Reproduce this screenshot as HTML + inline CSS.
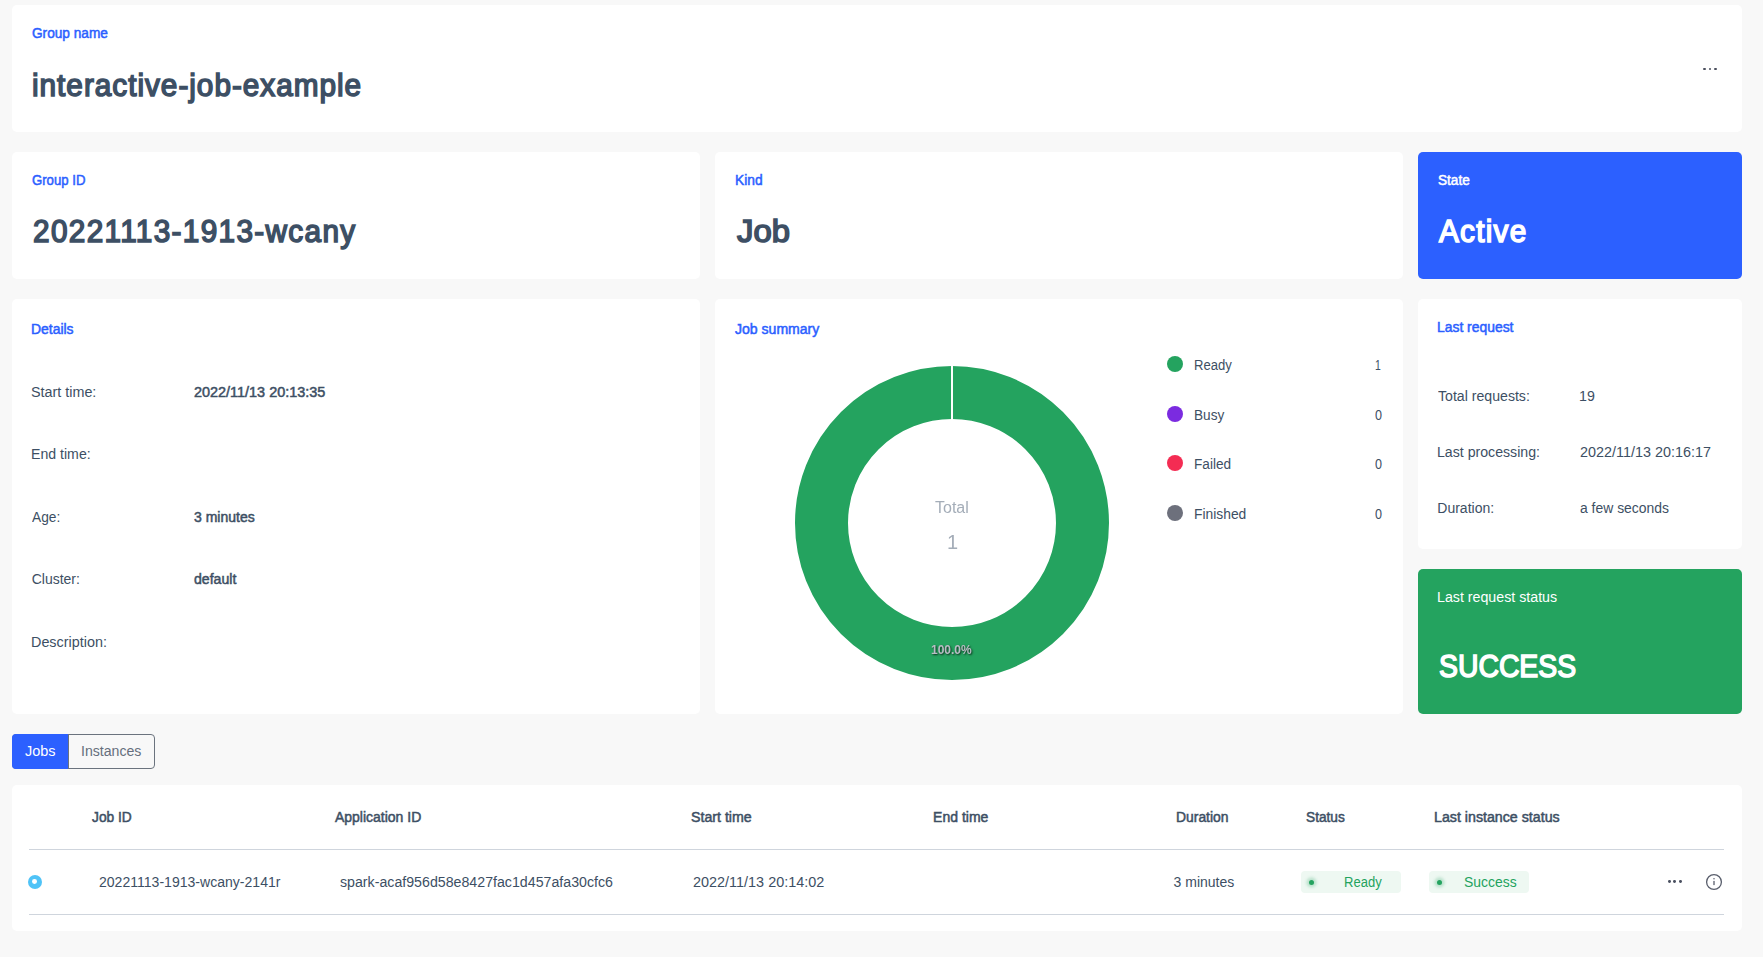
<!DOCTYPE html>
<html>
<head>
<meta charset="utf-8">
<style>
html,body{margin:0;padding:0;}
body{width:1763px;height:957px;overflow:hidden;background:#f8f8f8;position:relative;font-family:"Liberation Sans",sans-serif;}
.c{position:absolute;background:#fff;border-radius:5px;}
.t{position:absolute;white-space:nowrap;transform-origin:0 0;font-family:"Liberation Sans",sans-serif;}
.ln{position:absolute;height:1px;background:#cfd5dd;}
.dot{position:absolute;border-radius:50%;}
</style>
</head>
<body>
<!-- cards -->
<div class="c" style="left:12px;top:5px;width:1730px;height:127px"></div>
<div class="c" style="left:12px;top:152px;width:688px;height:127px"></div>
<div class="c" style="left:715px;top:152px;width:688px;height:127px"></div>
<div class="c" style="left:1418px;top:152px;width:324px;height:127px;background:#2c60ff"></div>
<div class="c" style="left:12px;top:299px;width:688px;height:415px"></div>
<div class="c" style="left:715px;top:299px;width:688px;height:415px"></div>
<div class="c" style="left:1418px;top:299px;width:324px;height:250px"></div>
<div class="c" style="left:1418px;top:569px;width:324px;height:145px;background:#24a35f"></div>
<div class="c" style="left:12px;top:785px;width:1730px;height:146px"></div>

<!-- top ellipsis -->
<div class="dot" style="left:1703.2px;top:67.6px;width:2.8px;height:2.8px;background:#4b4f5e"></div>
<div class="dot" style="left:1708.6px;top:67.6px;width:2.8px;height:2.8px;background:#4b4f5e"></div>
<div class="dot" style="left:1714px;top:67.6px;width:2.8px;height:2.8px;background:#4b4f5e"></div>

<!-- donut -->
<svg style="position:absolute;left:715px;top:299px" width="688" height="414" viewBox="715 299 688 414">
  <circle cx="952" cy="523" r="130.5" fill="none" stroke="#24a35f" stroke-width="53"/>
  <line x1="952" y1="364" x2="952" y2="421" stroke="#fff" stroke-width="2"/>
</svg>

<!-- legend dots -->
<div class="dot" style="left:1166.5px;top:356px;width:16px;height:16px;background:#24a35f"></div>
<div class="dot" style="left:1166.5px;top:406px;width:16px;height:16px;background:#7b2be0"></div>
<div class="dot" style="left:1166.5px;top:455px;width:16px;height:16px;background:#f42c53"></div>
<div class="dot" style="left:1166.5px;top:505px;width:16px;height:16px;background:#6d707c"></div>

<!-- tabs -->
<div style="position:absolute;left:12px;top:734px;width:143px;height:35px;box-sizing:border-box;border:1px solid #6b737e;border-radius:4px;"></div>
<div style="position:absolute;left:12px;top:734px;width:56.5px;height:35px;background:#2c60ff;border-radius:4px 0 0 4px"></div>
<div style="position:absolute;left:68px;top:734px;width:1px;height:35px;background:#6b737e"></div>

<!-- table -->
<div class="ln" style="left:29px;top:849px;width:1695px"></div>
<div class="ln" style="left:29px;top:914px;width:1695px"></div>
<div class="dot" style="left:27.7px;top:874.7px;width:14px;height:14px;background:#4fc3f7"></div>
<div class="dot" style="left:32.3px;top:879.3px;width:4.8px;height:4.8px;background:#fff"></div>
<div style="position:absolute;left:1301px;top:871px;width:100px;height:22px;background:#eef8f2;border-radius:4px"></div>
<div style="position:absolute;left:1429px;top:871px;width:100px;height:22px;background:#eef8f2;border-radius:4px"></div>
<div class="dot" style="left:1308.5px;top:880.1px;width:5px;height:5px;background:#24a35f;box-shadow:0 0 3px 2.5px rgba(36,163,95,.25)"></div>
<div class="dot" style="left:1436.5px;top:880.2px;width:5px;height:5px;background:#24a35f;box-shadow:0 0 3px 2.5px rgba(36,163,95,.25)"></div>
<div class="dot" style="left:1668.1px;top:880.4px;width:2.8px;height:2.8px;background:#4a5060"></div>
<div class="dot" style="left:1673.4px;top:880.4px;width:2.8px;height:2.8px;background:#4a5060"></div>
<div class="dot" style="left:1679px;top:880.4px;width:2.8px;height:2.8px;background:#4a5060"></div>
<svg style="position:absolute;left:1704px;top:872px" width="20" height="20" viewBox="0 0 20 20">
  <circle cx="10" cy="10" r="7.4" fill="none" stroke="#595e6c" stroke-width="1.3"/>
  <circle cx="10" cy="6.8" r="0.75" fill="#595e6c"/>
  <rect x="9.35" y="8.9" width="1.3" height="4.2" fill="#595e6c"/>
</svg>

<!-- chart texts -->
<div class="t" style="left:935px;top:500px;font-size:16px;line-height:16px;color:#a4adb8;will-change:transform">Total</div>
<div class="t" style="left:946.5px;top:532px;font-size:20px;line-height:20px;color:#a4adb8;will-change:transform">1</div>
<div class="t" style="left:931.1px;top:644px;font-size:12px;line-height:12px;font-weight:700;color:#b9bcc4;text-shadow:1px 1px 2px rgba(0,0,0,.75);will-change:transform">100.0%</div>

<div class="t" style="left:32.00px;top:26.00px;font-size:14px;line-height:14px;color:#2b5fff;-webkit-text-stroke:0.5px #2b5fff;transform:scaleX(0.9744);">Group name</div>
<div class="t" style="left:32.20px;top:172.90px;font-size:14px;line-height:14px;color:#2b5fff;-webkit-text-stroke:0.5px #2b5fff;transform:scaleX(0.9404);">Group ID</div>
<div class="t" style="left:734.71px;top:172.90px;font-size:14px;line-height:14px;color:#2b5fff;-webkit-text-stroke:0.5px #2b5fff;transform:scaleX(0.9852);">Kind</div>
<div class="t" style="left:1438.10px;top:172.90px;font-size:14px;line-height:14px;color:#ffffff;-webkit-text-stroke:0.5px #ffffff;transform:scaleX(0.9697);">State</div>
<div class="t" style="left:31.30px;top:321.60px;font-size:14px;line-height:14px;color:#2b5fff;-webkit-text-stroke:0.5px #2b5fff;transform:scaleX(0.9952);">Details</div>
<div class="t" style="left:735.00px;top:321.60px;font-size:14px;line-height:14px;color:#2b5fff;-webkit-text-stroke:0.5px #2b5fff;transform:scaleX(1.0035);">Job summary</div>
<div class="t" style="left:1437.31px;top:319.80px;font-size:14px;line-height:14px;color:#2b5fff;-webkit-text-stroke:0.5px #2b5fff;transform:scaleX(0.9922);">Last request</div>
<div class="t" style="left:1437.08px;top:589.60px;font-size:14px;line-height:14px;color:#ffffff;transform:scaleX(1.0154);">Last request status</div>
<div class="t" style="left:32.40px;top:68.50px;font-size:32px;line-height:32px;color:#3d4f64;-webkit-text-stroke:1.6px #3d4f64;letter-spacing:1.051px;transform:scaleX(0.93);">interactive-job-example</div>
<div class="t" style="left:32.70px;top:215.40px;font-size:32px;line-height:32px;color:#3d4f64;-webkit-text-stroke:1.6px #3d4f64;letter-spacing:1.424px;transform:scaleX(0.93);">20221113-1913-wcany</div>
<div class="t" style="left:736.52px;top:215.40px;font-size:32px;line-height:32px;color:#3d4f64;-webkit-text-stroke:1.6px #3d4f64;transform:scaleX(1.0250);">Job</div>
<div class="t" style="left:1439.00px;top:215.40px;font-size:32px;line-height:32px;color:#ffffff;-webkit-text-stroke:1.6px #ffffff;letter-spacing:1.346px;transform:scaleX(0.93);">Active</div>
<div class="t" style="left:1438.70px;top:649.60px;font-size:32px;line-height:32px;color:#ffffff;-webkit-text-stroke:1.6px #ffffff;transform:scaleX(0.8864);">SUCCESS</div>
<div class="t" style="left:30.78px;top:385.10px;font-size:14px;line-height:14px;color:#3d4f64;transform:scaleX(1.0242);">Start time:</div>
<div class="t" style="left:193.90px;top:385.10px;font-size:14px;line-height:14px;color:#3d4f64;-webkit-text-stroke:0.5px #3d4f64;transform:scaleX(1.0305);">2022/11/13 20:13:35</div>
<div class="t" style="left:30.79px;top:447.20px;font-size:14px;line-height:14px;color:#3d4f64;transform:scaleX(1.0088);">End time:</div>
<div class="t" style="left:31.70px;top:510.40px;font-size:14px;line-height:14px;color:#3d4f64;transform:scaleX(0.9786);">Age:</div>
<div class="t" style="left:194.00px;top:510.40px;font-size:14px;line-height:14px;color:#3d4f64;-webkit-text-stroke:0.5px #3d4f64;">3 minutes</div>
<div class="t" style="left:31.70px;top:572.00px;font-size:14px;line-height:14px;color:#3d4f64;">Cluster:</div>
<div class="t" style="left:194.00px;top:572.00px;font-size:14px;line-height:14px;color:#3d4f64;-webkit-text-stroke:0.5px #3d4f64;transform:scaleX(1.0070);">default</div>
<div class="t" style="left:30.67px;top:635.10px;font-size:14px;line-height:14px;color:#3d4f64;transform:scaleX(1.0264);">Description:</div>
<div class="t" style="left:1193.57px;top:357.90px;font-size:14px;line-height:14px;color:#3d4f64;transform:scaleX(0.9350);">Ready</div>
<div class="t" style="left:1375.06px;top:357.90px;font-size:14px;line-height:14px;color:#3d4f64;transform:scaleX(0.7429);">1</div>
<div class="t" style="left:1193.53px;top:407.60px;font-size:14px;line-height:14px;color:#3d4f64;transform:scaleX(0.9733);">Busy</div>
<div class="t" style="left:1374.80px;top:407.60px;font-size:14px;line-height:14px;color:#3d4f64;transform:scaleX(0.9000);">0</div>
<div class="t" style="left:1193.53px;top:457.10px;font-size:14px;line-height:14px;color:#3d4f64;transform:scaleX(0.9730);">Failed</div>
<div class="t" style="left:1374.80px;top:457.10px;font-size:14px;line-height:14px;color:#3d4f64;transform:scaleX(0.9000);">0</div>
<div class="t" style="left:1193.51px;top:506.90px;font-size:14px;line-height:14px;color:#3d4f64;transform:scaleX(0.9885);">Finished</div>
<div class="t" style="left:1374.80px;top:506.90px;font-size:14px;line-height:14px;color:#3d4f64;transform:scaleX(0.9000);">0</div>
<div class="t" style="left:1438.30px;top:388.80px;font-size:14px;line-height:14px;color:#3d4f64;transform:scaleX(1.0089);">Total requests:</div>
<div class="t" style="left:1579.19px;top:388.80px;font-size:14px;line-height:14px;color:#3d4f64;transform:scaleX(1.0143);">19</div>
<div class="t" style="left:1437.29px;top:444.70px;font-size:14px;line-height:14px;color:#3d4f64;transform:scaleX(1.0100);">Last processing:</div>
<div class="t" style="left:1580.20px;top:444.70px;font-size:14px;line-height:14px;color:#3d4f64;transform:scaleX(1.0276);">2022/11/13 20:16:17</div>
<div class="t" style="left:1437.30px;top:500.80px;font-size:14px;line-height:14px;color:#3d4f64;">Duration:</div>
<div class="t" style="left:1580.20px;top:500.80px;font-size:14px;line-height:14px;color:#3d4f64;transform:scaleX(0.9944);">a few seconds</div>
<div class="t" style="left:24.90px;top:744.20px;font-size:14px;line-height:14px;color:#ffffff;transform:scaleX(1.0345);">Jobs</div>
<div class="t" style="left:80.99px;top:744.20px;font-size:14px;line-height:14px;color:#666f7d;transform:scaleX(1.0085);">Instances</div>
<div class="t" style="left:92.10px;top:810.20px;font-size:14px;line-height:14px;color:#3d4f64;-webkit-text-stroke:0.5px #3d4f64;transform:scaleX(0.9825);">Job ID</div>
<div class="t" style="left:334.90px;top:810.20px;font-size:14px;line-height:14px;color:#3d4f64;-webkit-text-stroke:0.5px #3d4f64;">Application ID</div>
<div class="t" style="left:691.30px;top:810.20px;font-size:14px;line-height:14px;color:#3d4f64;-webkit-text-stroke:0.5px #3d4f64;transform:scaleX(1.0133);">Start time</div>
<div class="t" style="left:933.10px;top:810.20px;font-size:14px;line-height:14px;color:#3d4f64;-webkit-text-stroke:0.5px #3d4f64;">End time</div>
<div class="t" style="left:1176.01px;top:810.20px;font-size:14px;line-height:14px;color:#3d4f64;-webkit-text-stroke:0.5px #3d4f64;transform:scaleX(0.9923);">Duration</div>
<div class="t" style="left:1305.70px;top:810.20px;font-size:14px;line-height:14px;color:#3d4f64;-webkit-text-stroke:0.5px #3d4f64;transform:scaleX(0.9775);">Status</div>
<div class="t" style="left:1433.88px;top:810.20px;font-size:14px;line-height:14px;color:#3d4f64;-webkit-text-stroke:0.5px #3d4f64;transform:scaleX(1.0154);">Last instance status</div>
<div class="t" style="left:99.20px;top:875.20px;font-size:14px;line-height:14px;color:#3d4f64;transform:scaleX(1.0033);">20221113-1913-wcany-2141r</div>
<div class="t" style="left:340.00px;top:875.00px;font-size:14px;line-height:14px;color:#3d4f64;transform:scaleX(1.0134);">spark-acaf956d58e8427fac1d457afa30cfc6</div>
<div class="t" style="left:693.10px;top:875.20px;font-size:14px;line-height:14px;color:#3d4f64;transform:scaleX(1.0307);">2022/11/13 20:14:02</div>
<div class="t" style="left:1173.60px;top:875.00px;font-size:14px;line-height:14px;color:#3d4f64;">3 minutes</div>
<div class="t" style="left:1344.17px;top:875.00px;font-size:14px;line-height:14px;color:#23a35e;transform:scaleX(0.9300);">Ready</div>
<div class="t" style="left:1464.41px;top:875.20px;font-size:14px;line-height:14px;color:#23a35e;transform:scaleX(0.9942);">Success</div>
</body>
</html>
